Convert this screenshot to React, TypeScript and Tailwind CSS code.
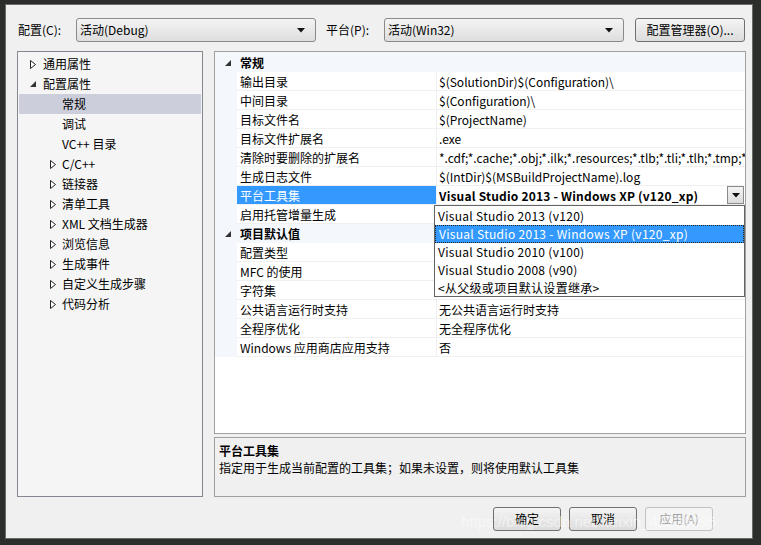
import React from 'react'

type TreeItem = { label: string; level: number; arrow?: 'open' | 'closed'; selected?: boolean }

const treeItems: TreeItem[] = [
    { label: '通用属性', level: 0, arrow: 'closed' },
    { label: '配置属性', level: 0, arrow: 'open' },
    { label: '常规', level: 1, selected: true },
    { label: '调试', level: 1 },
    { label: 'VC++ 目录', level: 1 },
    { label: 'C/C++', level: 1, arrow: 'closed' },
    { label: '链接器', level: 1, arrow: 'closed' },
    { label: '清单工具', level: 1, arrow: 'closed' },
    { label: 'XML 文档生成器', level: 1, arrow: 'closed' },
    { label: '浏览信息', level: 1, arrow: 'closed' },
    { label: '生成事件', level: 1, arrow: 'closed' },
    { label: '自定义生成步骤', level: 1, arrow: 'closed' },
    { label: '代码分析', level: 1, arrow: 'closed' },
]

type Row = { cat?: string; name?: string; value?: string; selected?: boolean }

const rows: Row[] = [
    { cat: '常规' },
    { name: '输出目录', value: '$(SolutionDir)$(Configuration)\\' },
    { name: '中间目录', value: '$(Configuration)\\' },
    { name: '目标文件名', value: '$(ProjectName)' },
    { name: '目标文件扩展名', value: '.exe' },
    { name: '清除时要删除的扩展名', value: '*.cdf;*.cache;*.obj;*.ilk;*.resources;*.tlb;*.tli;*.tlh;*.tmp;*.rsp;*.pgc;*.pgd' },
    { name: '生成日志文件', value: '$(IntDir)$(MSBuildProjectName).log' },
    { name: '平台工具集', value: 'Visual Studio 2013 - Windows XP (v120_xp)', selected: true },
    { name: '启用托管增量生成', value: '' },
    { cat: '项目默认值' },
    { name: '配置类型', value: '' },
    { name: 'MFC 的使用', value: '' },
    { name: '字符集', value: '' },
    { name: '公共语言运行时支持', value: '无公共语言运行时支持' },
    { name: '全程序优化', value: '无全程序优化' },
    { name: 'Windows 应用商店应用支持', value: '否' },
]

const options = [
    'Visual Studio 2013 (v120)',
    'Visual Studio 2013 - Windows XP (v120_xp)',
    'Visual Studio 2010 (v100)',
    'Visual Studio 2008 (v90)',
    '<从父级或项目默认设置继承>',
]

const Closed = () => (
    <svg width="8" height="9" viewBox="0 0 8 9">
        <path d="M1.5 0.5 L6.5 4.5 L1.5 8.5 Z" fill="white" stroke="#222" strokeWidth="1" />
    </svg>
)

const Open = () => (
    <svg width="8" height="8" viewBox="0 0 8 8">
        <path d="M7 1 L7 7 L1 7 Z" fill="#333" />
    </svg>
)

const DownArrow = () => (
    <svg width="8" height="5" viewBox="0 0 8 5">
        <path d="M0 0 L8 0 L4 4.5 Z" fill="#111" />
    </svg>
)

const Combo = ({ text, width }: { text: string; width: string }) => (
    <div className={`${width} h-[24px] flex items-center justify-between px-[3px] pr-[10px] border border-[#8a8a8a] rounded-[3px] bg-gradient-to-b from-[#f4f4f4] to-[#dedede]`}>
        <span>{text}</span>
        <DownArrow />
    </div>
)

const Button = ({ text, disabled }: { text: string; disabled?: boolean }) => (
    <div
        className={`w-[68px] h-[24px] flex items-center justify-center rounded-[3px] border bg-gradient-to-b ${disabled ? 'border-[#c2c2c2] from-[#f4f4f4] to-[#f4f4f4] text-[#a0a0a0]' : 'border-[#707070] from-[#f4f4f4] to-[#dcdcdc] text-black'}`}
    >
        {text}
    </div>
)

const App = () => {
    return (
        <div className="w-[761px] h-[545px] bg-[#2b2e2a] pl-[5px] pt-[4px] pr-[8px] pb-[6px] font-['Noto_Sans_CJK_SC','Noto_Sans',sans-serif] text-[12px] leading-[16px] text-black">
            <div className="relative w-full h-full bg-[#f0f0f0] border border-[#6b6b6b] flex flex-col pl-[11px] pt-[13px] pr-[6px]">
                {/* top bar */}
                <div className="flex items-center h-[24px]">
                    <span className="w-[59px] pl-[1px]">配置(C):</span>
                    <Combo text="活动(Debug)" width="w-[240px]" />
                    <span className="ml-[10px] w-[58px]">平台(P):</span>
                    <Combo text="活动(Win32)" width="w-[240px]" />
                    <div className="ml-[11px] w-[110px] h-[24px] flex items-center justify-center border border-[#707070] rounded-[3px] bg-gradient-to-b from-[#f4f4f4] to-[#dcdcdc]">
                        配置管理器(O)...
                    </div>
                </div>

                {/* main */}
                <div className="flex mt-[9px] h-[446px]">
                    <div className="w-[186px] h-full border border-[#828790] bg-[#f5f5f5] py-[2px] px-[1px]">
                        {treeItems.map((it) => (
                            <div
                                key={it.label}
                                className={`h-[20px] flex items-center ${it.selected ? 'bg-[#cccfdb]' : ''}`}
                            >
                                <div className={`${it.level === 0 ? 'w-[24px] pl-[10px]' : 'w-[43px] pl-[30px]'} flex items-center`}>
                                    {it.arrow === 'closed' && <Closed />}
                                    {it.arrow === 'open' && <Open />}
                                </div>
                                <span>{it.label}</span>
                            </div>
                        ))}
                    </div>

                    <div className="ml-[11px] w-[532px] flex flex-col">
                        {/* property grid */}
                        <div className="relative h-[383px] border border-[#a0a0a0] bg-white">
                            <div className="h-[1px] bg-[#f4f7fb]" />
                            {rows.map((r, i) =>
                                r.cat ? (
                                    <div key={i} className="h-[19px] flex items-center pt-[1px] bg-[#f4f7fb]">
                                        <div className="w-[22px] pl-[9px] flex items-center">
                                            <Open />
                                        </div>
                                        <span className="pl-[3px] font-bold">{r.cat}</span>
                                    </div>
                                ) : (
                                    <div key={i} className="h-[19px] flex">
                                        <div className="w-[22px] bg-[#f4f7fb]" />
                                        <div
                                            className={`w-[199px] flex items-center pt-[1px] pl-[3px] border-b border-[#f0f0f0] ${r.selected ? 'bg-[#3399ff] text-white' : ''}`}
                                        >
                                            {r.name}
                                        </div>
                                        <div className="flex-1 min-w-0 flex items-center border-l border-b border-[#f0f0f0] pl-[2px]">
                                            <span className={`flex-1 pt-[1px] whitespace-nowrap overflow-hidden ${r.selected ? 'font-bold tracking-[0.2px]' : ''}`}>{r.value}</span>
                                            {r.selected && (
                                                <div className="w-[17px] h-[18px] mr-[1px] flex items-center justify-center border border-[#8a8a8a] bg-gradient-to-b from-[#f4f4f4] to-[#dcdcdc]">
                                                    <DownArrow />
                                                </div>
                                            )}
                                        </div>
                                    </div>
                                ),
                            )}

                            {/* open dropdown */}
                            <div className="absolute left-[219px] top-[153px] w-[311px] h-[92px] border border-[#646464] bg-white pt-[1px]">
                                {options.map((o, i) => (
                                    <div
                                        key={o}
                                        className={`h-[18px] flex items-center pl-[3px] whitespace-nowrap tracking-[0.3px] ${i === 1 ? 'bg-[#3399ff] text-white border border-dotted border-[#222]' : ''}`}
                                    >
                                        {o}
                                    </div>
                                ))}
                            </div>
                        </div>

                        {/* description */}
                        <div className="mt-[3px] h-[60px] border border-[#a0a0a0] bg-[#f0f0f0] px-[4px] pt-[4px]">
                            <div className="font-bold h-[17px] flex items-center">平台工具集</div>
                            <div className="h-[17px] flex items-center">指定用于生成当前配置的工具集；如果未设置，则将使用默认工具集</div>
                        </div>
                    </div>
                </div>

                {/* buttons */}
                <div className="flex justify-end gap-[8px] mt-[10px] pr-[33px]">
                    <Button text="确定" />
                    <Button text="取消" />
                    <Button text="应用(A)" disabled />
                </div>

                <div className="absolute left-[455px] top-[508px] text-[15px] leading-[18px] text-white/50 font-['Liberation_Sans',sans-serif] pointer-events-none whitespace-nowrap">
                    https://blog.csdn.net/weixin_42339095
                </div>
            </div>
        </div>
    )
}

export default App
